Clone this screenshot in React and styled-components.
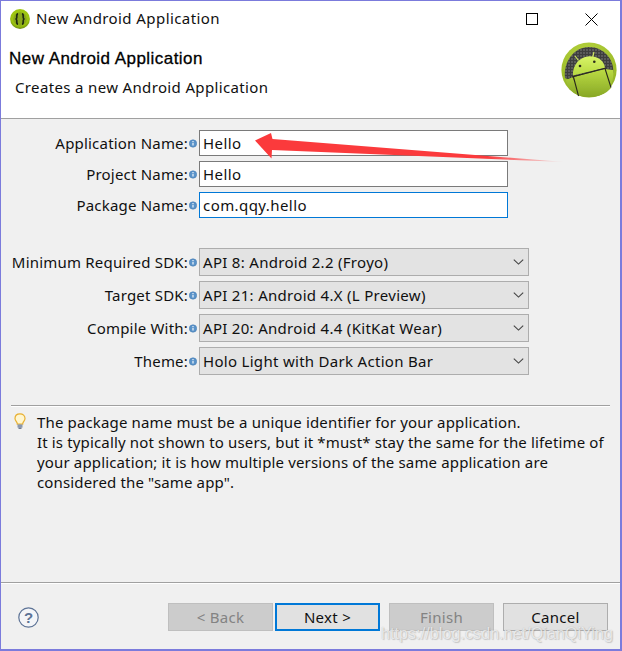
import styled, { createGlobalStyle } from "styled-components";

const Global = createGlobalStyle`
  html, body {
    margin: 0;
    padding: 0;
    background: #f0f0f0;
  }
  * {
    box-sizing: border-box;
  }
`;

const Frame = styled.div`
  position: relative;
  width: 622px;
  height: 651px;
  display: flex;
  flex-direction: column;
  background: #f0f0f0;
  border: 1px solid #7b7bdc;
  border-right-width: 2px;
  border-bottom-width: 2px;
  font-family: "Noto Sans", "Open Sans", sans-serif;
  font-size: 15px;
  color: #101010;
  overflow: hidden;
`;

const TitleBar = styled.div`
  height: 37px;
  flex: none;
  display: flex;
  align-items: center;
  background: #fff;
  padding: 0 6px 1px 9px;
`;

const TitleText = styled.span`
  margin: 0 0 2px 6px;
  flex: 1;
  letter-spacing: 0.42px;
`;

const WindowButton = styled.div`
  width: 46px;
  height: 36px;
  margin-right: ${(p) => p.$gap}px;
  display: flex;
  align-items: center;
  justify-content: center;
`;

const Header = styled.div`
  height: 81px;
  flex: none;
  display: flex;
  justify-content: space-between;
  background: #fff;
  border-bottom: 1px solid #a0a0a0;
`;

const HeaderText = styled.div`
  display: flex;
  flex-direction: column;
  padding: 9px 0 0 8px;
`;

const HeaderTitle = styled.h1`
  margin: 0;
  font-family: "Liberation Sans", Arial, sans-serif;
  font-size: 17px;
  font-weight: 400;
  line-height: 23px;
  color: #000;
  -webkit-text-stroke: 0.3px #000;
  letter-spacing: 0.46px;
`;

const HeaderSub = styled.p`
  margin: 7px 0 0 6px;
  line-height: 20px;
  letter-spacing: 0.35px;
`;

const LogoSlot = styled.div`
  padding: 4px 3px 0 0;
`;

const Form = styled.div`
  display: flex;
  flex-direction: column;
  padding: 11px 0 0 9px;
`;

const Group = styled.div`
  display: flex;
  flex-direction: column;
  gap: 5px;
  margin-bottom: 30px;
`;

const Row = styled.div`
  display: flex;
  align-items: center;
`;

const Label = styled.label`
  width: 178px;
  text-align: right;
  white-space: nowrap;
  letter-spacing: 0.2px;
`;

const InfoSlot = styled.span`
  width: 11px;
  display: flex;
  justify-content: flex-start;
  padding-left: 1px;
`;

const TextField = styled.input`
  width: 309px;
  height: 26px;
  padding: 0 3px;
  background: #fff;
  border: 1px solid ${(p) => (p.$focused ? "#0078d7" : "#7a7a7a")};
  border-radius: 0;
  outline: none;
  font: inherit;
  color: inherit;
  letter-spacing: 0.43px;
`;

const Combo = styled.div`
  width: 330px;
  height: 28px;
  padding: 0 4px 0 3px;
  display: flex;
  align-items: center;
  justify-content: space-between;
  background: #e3e3e3;
  border: 1px solid #adadad;
  letter-spacing: 0.3px;
`;

const Divider = styled.div`
  height: 1px;
  flex: none;
  margin: 0 ${(p) => p.$inset}px;
  background: #a0a0a0;
  box-shadow: 0 1px 0 #fff;
`;

const Hint = styled.div`
  flex: 1;
  display: flex;
  padding: 6px 0 0 13px;
`;

const BulbIcon = styled.svg`
  flex: none;
  margin-top: 1px;
`;

const HintText = styled.p`
  margin: 0 0 0 11px;
  width: 582px;
  line-height: 20px;
  letter-spacing: 0.15px;
`;

const Footer = styled.div`
  height: 66px;
  flex: none;
  display: flex;
  align-items: flex-start;
  padding: 20px 0 0 17px;
`;

const HelpSlot = styled.div`
  width: 150px;
  height: 28px;
  display: flex;
  align-items: center;
`;

const Button = styled.button`
  width: 105px;
  height: 28px;
  margin-left: ${(p) => p.$gap}px;
  padding: 0;
  font: inherit;
  letter-spacing: 0.3px;
  color: ${(p) => (p.disabled ? "#838383" : "#101010")};
  background: ${(p) => (p.disabled ? "#cccccc" : "#e1e1e1")};
  border: ${(p) =>
    p.$primary
      ? "2px solid #0078d7"
      : p.disabled
      ? "1px solid #bfbfbf"
      : "1px solid #adadad"};
`;

const Arrow = styled.svg`
  position: absolute;
  left: 253px;
  top: 131px;
  pointer-events: none;
`;

const Watermark = styled.div`
  position: absolute;
  right: 7px;
  bottom: 6px;
  font-family: "Liberation Sans", Arial, sans-serif;
  font-size: 16px;
  letter-spacing: 0.1px;
  color: rgba(255, 255, 255, 0.7);
  text-shadow: 0 0 1px rgba(130, 130, 130, 0.5), 1px 1px 1px rgba(120, 120, 120, 0.3);
  pointer-events: none;
`;

const AppIcon = () => (
  <svg width="20" height="20" viewBox="0 0 20 20">
    <defs>
      <radialGradient id="appGreen" cx="50%" cy="40%" r="60%">
        <stop offset="0" stopColor="#a4cc14" />
        <stop offset="0.75" stopColor="#9cc40f" />
        <stop offset="1" stopColor="#6c8c10" />
      </radialGradient>
    </defs>
    <circle cx="10" cy="10" r="9.9" fill="url(#appGreen)" />
    <circle cx="10" cy="10" r="6.8" fill="#8aa81c" />
    <path
      d="M8 4.8C6.3 5 6.8 6.8 6.8 8.3 6.8 9.4 6.2 10 5.4 10c.8 0 1.4.6 1.4 1.7 0 1.5-.5 3.3 1.2 3.5M12 4.8c1.7.2 1.2 2 1.2 3.5 0 1.1.6 1.7 1.4 1.7-.8 0-1.4.6-1.4 1.7 0 1.5.5 3.3-1.2 3.5"
      fill="none"
      stroke="#1f2a10"
      strokeWidth="1.7"
    />
  </svg>
);

const AndroidLogo = () => (
  <svg width="56" height="56" viewBox="0 0 56 56">
    <defs>
      <radialGradient id="rim" cx="45%" cy="25%" r="80%">
        <stop offset="0" stopColor="#b8d440" />
        <stop offset="0.7" stopColor="#9dbd2a" />
        <stop offset="1" stopColor="#8cab22" />
      </radialGradient>
      <pattern id="plaid" width="3" height="3" patternUnits="userSpaceOnUse">
        <rect width="3" height="3" fill="#5a5a5a" />
        <path d="M0 .5h3M.5 0v3" stroke="#3e3e3e" strokeWidth="1" />
      </pattern>
      <linearGradient id="head" x1="0" y1="0" x2="0" y2="1">
        <stop offset="0" stopColor="#d8f466" />
        <stop offset="1" stopColor="#b6d840" />
      </linearGradient>
      <linearGradient id="body" x1="0" y1="0" x2="0" y2="1">
        <stop offset="0" stopColor="#bcdc44" />
        <stop offset="1" stopColor="#88a826" />
      </linearGradient>
      <filter id="soft">
        <feGaussianBlur stdDeviation="0.35" />
      </filter>
    </defs>
    <g filter="url(#soft)">
      <circle cx="28" cy="28" r="27.6" fill="url(#rim)" />
      <path d="M4 36C2 20 13 5 28 5s26 13 24 27l-8 4-30 4z" fill="url(#plaid)" />
      <path d="M5 38l7-3 5 18C10 50 6 44 5 38zM44 27l8 1c1 7-1 13-3 17z" fill="url(#body)" />
      <path d="M12 33.6C11 23 19 15 27 14.4c9-.6 16 4 17 11.4z" fill="url(#head)" />
      <path d="M12.5 35L44 27l6 19c-5 6-13 9-22 9-4 0-8-.6-11-2z" fill="url(#body)" />
      <path d="M11 35l34-9M12.5 35l5 19M44 26.5l6 19" stroke="#2a2a1c" strokeWidth="1.1" fill="none" />
      <path d="M14 14l3.5 4.500M33 10l-1.300 5" stroke="#cfe860" strokeWidth="1.2" />
      <circle cx="19" cy="24" r="1.3" fill="#2a2a1c" />
      <circle cx="33.3" cy="19.8" r="1.3" fill="#2a2a1c" />
    </g>
  </svg>
);

const InfoIcon = () => (
  <svg width="8" height="9" viewBox="0 0 8 9">
    <circle cx="4" cy="4.5" r="3.7" fill="#5a93c9" stroke="#4a7fb5" strokeWidth="0.6" />
    <path d="M4 2v1M4 3.8v2.8" stroke="#fff" strokeWidth="1.1" />
  </svg>
);

const Chevron = () => (
  <svg width="11" height="6" viewBox="0 0 11 6">
    <path d="M.8.6l4.700 4.500L10.200.6" fill="none" stroke="#444" strokeWidth="1.1" />
  </svg>
);

const Bulb = () => (
  <BulbIcon width="12" height="16" viewBox="0 0 12 16">
    <path
      d="M6 .8C3 .8 1 2.8 1 5.4c0 2 1.400 3 2 4.400.2.5.3 1 .3 1.400h5.400c0-.4.1-.9.3-1.400.6-1.400 2-2.400 2-4.400C11 2.800 9 .8 6 .8z"
      fill="#fff6d0"
      stroke="#e8b030"
      strokeWidth="1.2"
    />
    <rect x="3.5" y="11.4" width="5" height="3.2" fill="#8a98b0" />
    <rect x="4.5" y="14.6" width="3" height="1.2" fill="#55637c" />
  </BulbIcon>
);

const HelpIcon = () => (
  <svg width="21" height="21" viewBox="0 0 21 21">
    <circle cx="10.5" cy="10.5" r="9.7" fill="#f4f5f8" stroke="#5d7396" strokeWidth="1.2" />
    <text
      x="10.5"
      y="16"
      textAnchor="middle"
      fontFamily="Liberation Sans, Arial, sans-serif"
      fontSize="15"
      fontWeight="700"
      fill="#5d7396"
    >
      ?
    </text>
  </svg>
);

const nameFields = [
  { label: "Application Name:", value: "Hello" },
  { label: "Project Name:", value: "Hello" },
  { label: "Package Name:", value: "com.qqy.hello", focused: true },
];

const sdkFields = [
  { label: "Minimum Required SDK:", value: "API 8: Android 2.2 (Froyo)" },
  { label: "Target SDK:", value: "API 21: Android 4.X (L Preview)" },
  { label: "Compile With:", value: "API 20: Android 4.4 (KitKat Wear)" },
  { label: "Theme:", value: "Holo Light with Dark Action Bar" },
];

const App = () => {
  return (
    <Frame>
      <Global />
      <TitleBar>
        <AppIcon />
        <TitleText>New Android Application</TitleText>
        <WindowButton $gap={13}>
          <svg width="12" height="12" viewBox="0 0 12 12">
            <rect x="0.5" y="0.5" width="11" height="11" fill="none" stroke="#000" />
          </svg>
        </WindowButton>
        <WindowButton $gap={0}>
          <svg width="13" height="13" viewBox="0 0 13 13">
            <path d="M.5.5l12 12M12.5.5l-12 12" stroke="#000" fill="none" />
          </svg>
        </WindowButton>
      </TitleBar>
      <Header>
        <HeaderText>
          <HeaderTitle>New Android Application</HeaderTitle>
          <HeaderSub>Creates a new Android Application</HeaderSub>
        </HeaderText>
        <LogoSlot>
          <AndroidLogo />
        </LogoSlot>
      </Header>
      <Form>
        <Group>
          {nameFields.map((f) => (
            <Row key={f.label}>
              <Label>{f.label}</Label>
              <InfoSlot>
                <InfoIcon />
              </InfoSlot>
              <TextField defaultValue={f.value} $focused={f.focused} readOnly />
            </Row>
          ))}
        </Group>
        <Group>
          {sdkFields.map((f) => (
            <Row key={f.label}>
              <Label>{f.label}</Label>
              <InfoSlot>
                <InfoIcon />
              </InfoSlot>
              <Combo>
                {f.value}
                <Chevron />
              </Combo>
            </Row>
          ))}
        </Group>
      </Form>
      <Divider $inset={10} />
      <Hint>
        <Bulb />
        <HintText>
          The package name must be a unique identifier for your application.
          <br />
          It is typically not shown to users, but it *must* stay the same for the lifetime of
          your application; it is how multiple versions of the same application are
          considered the "same app".
        </HintText>
      </Hint>
      <Divider $inset={0} />
      <Footer>
        <HelpSlot>
          <HelpIcon />
        </HelpSlot>
        <Button disabled $gap={0}>&lt; Back</Button>
        <Button $primary $gap={2}>Next &gt;</Button>
        <Button disabled $gap={9}>Finish</Button>
        <Button $gap={9}>Cancel</Button>
      </Footer>
      <Arrow width="312" height="30" viewBox="0 0 312 30">
        <defs>
          <linearGradient id="arrowFade" x1="0" y1="0" x2="1" y2="0">
            <stop offset="0" stopColor="#fb3a3c" />
            <stop offset="0.75" stopColor="#fb3a3c" />
            <stop offset="1" stopColor="#fb3a3c" stopOpacity="0" />
          </linearGradient>
        </defs>
        <path d="M1 8.5L17 1l1.5 6L311 30 18 18l-.5 8.500z" fill="url(#arrowFade)" />
      </Arrow>
      <Watermark>https://blog.csdn.net/QianQiYing</Watermark>
    </Frame>
  );
};

export default App;
